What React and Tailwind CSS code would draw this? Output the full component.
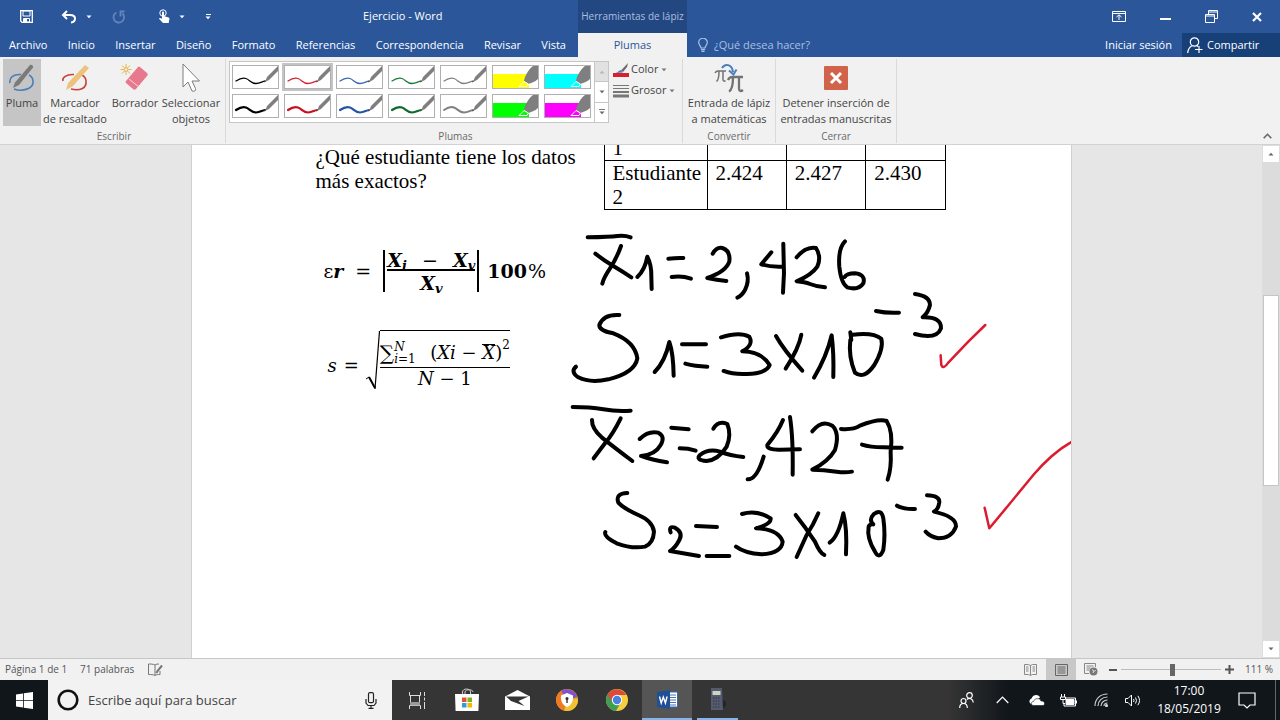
import React, { useState } from "react";

/* ────── static data ────── */
const TABS = [
    "Archivo", "Inicio", "Insertar", "Diseño", "Formato",
    "Referencias", "Correspondencia", "Revisar", "Vista",
];

const PENS = [
    { color: "#000000", w: 1.3 },
    { color: "#d8202f", w: 1.3 },
    { color: "#3a66b0", w: 1.3 },
    { color: "#1b7a3a", w: 1.3 },
    { color: "#808080", w: 1.3 },
    { color: "#ffff00", marker: true },
    { color: "#00ffff", marker: true },
    { color: "#000000", w: 2.2 },
    { color: "#c8101f", w: 2.2 },
    { color: "#2455a4", w: 2.2 },
    { color: "#0c6b2a", w: 2.2 },
    { color: "#808080", w: 2 },
    { color: "#00ff00", marker: true },
    { color: "#ff00ff", marker: true },
];

const INK_X1 = [
    "M83 292Q150 291 172 288T212 292",
    "M106 341Q130 360 160 378T214 412M183 318Q170 355 150 385T127 431",
    "M232 411Q255 390 262 350Q275 375 274 410L275 447",
    "M325 356Q350 353 370 354M335 411Q365 406 393 416",
    "M458 341Q470 320 487 324Q512 332 508 365Q498 395 442 414Q470 420 499 423",
    "M561 400Q568 425 555 450Q545 468 532 473",
    "M634 337L604 373Q630 381 664 380M670 311L672 400L669 458",
    "M710 352Q738 318 768 324Q785 350 772 380Q755 405 710 424Q735 426 750 432Q770 440 795 442",
    "M855 304Q834 325 838 380Q843 430 862 442Q895 452 910 430Q918 404 885 400Q860 400 854 411",
];

const INK_S1 = [
    "M178 75Q130 72 118 105Q117 122 160 130Q225 155 232 205Q225 248 145 268Q90 280 55 262Q30 245 48 230",
    "M284 246Q315 215 328 156Q340 190 341 257",
    "M366 163L438 163M376 221Q405 229 442 230",
    "M483 142Q540 124 568 140Q582 165 547 184Q605 185 629 225Q620 250 560 252Q520 254 491 243",
    "M648 138Q670 178 727 242M724 134Q717 175 677 236",
    "M762 263Q800 200 815 136Q822 190 820 261",
    "M871 127L874 150M878 134Q940 126 964 146Q972 175 943 225Q912 270 885 248Q865 200 871 150",
    "M948 63Q980 70 1017 68",
    "M1065 12Q1110 18 1110 45Q1105 68 1088 82Q1145 80 1143 115Q1130 150 1065 132",
];

const INK_X2_S2 = [
    "M38 36Q90 36 130 43T212 47",
    "M96 75Q95 100 125 127Q160 155 217 198M182 70Q160 115 135 145L101 190",
    "M239 132Q265 106 295 113Q317 125 302 150Q285 180 243 183Q275 195 321 202",
    "M334 98L386 103M359 160Q385 160 407 167",
    "M460 101Q475 75 502 87Q515 120 500 155Q475 195 440 198Q405 195 420 180Q445 160 480 170Q510 182 550 186",
    "M611 185Q590 255 563 253",
    "M669 75Q655 110 622 150Q620 165 660 164L720 163M690 66Q700 130 698 239",
    "M757 109Q785 73 817 92Q840 115 825 165Q805 200 757 224Q790 224 830 230Q855 234 876 230",
    "M843 102Q880 105 900 92Q955 70 980 78Q1000 110 992 170Q995 220 983 254M906 149Q930 157 970 157L1025 158",
    "M202 294Q165 295 175 323Q190 340 235 360Q278 378 282 410Q280 445 255 455Q215 462 170 445Q130 425 136 411",
    "M332 412Q325 392 345 398Q370 412 358 435Q345 460 330 468Q370 475 417 483",
    "M408 393L471 396M440 483L508 483",
    "M546 357Q590 343 632 370Q635 387 588 400Q655 402 668 440Q665 475 605 478Q555 475 528 455",
    "M707 360Q735 395 765 440Q780 475 793 480M775 355Q760 390 740 420L710 486",
    "M809 443Q835 425 850 355Q862 400 858 478",
    "M940 388Q925 375 942 357Q965 340 970 370Q977 420 970 465Q958 495 945 470Q920 430 926 395Q928 388 938 388",
    "M1011 332Q1030 343 1065 342",
    "M1101 301Q1140 302 1138 322Q1135 345 1122 350Q1190 365 1188 395Q1175 430 1135 430Q1110 425 1097 410",
];

/* ────── small helpers ────── */
function Caret({ className = "" }) {
    return (
        <svg width="6" height="4" viewBox="0 0 6 4" className={className} aria-hidden="true">
            <path d="M.5 .5h5L3 3.300z" fill="currentColor" />
        </svg>
    );
}

function PenSwatch({ pen, selected, onClick }) {
    return (
        <button
            type="button"
            onClick={onClick}
            aria-label={`Pluma ${pen.color}`}
            aria-pressed={selected}
            className={
                selected
                    ? "h-6 w-[47px] border border-[#b0b0b0] bg-white outline-2 outline-[#c4c4c4]"
                    : "h-6 w-[47px] border border-[#b0b0b0] bg-white"
            }
        >
            {pen.marker ? (
                <svg width="45" height="22" viewBox="0 0 45 22" className="block">
                    <path d="M0 8h36v14H0z" fill={pen.color} />
                    <path d="M45 0v13c-3 3-7 4-10 5l-4-3c1-6 5-12 9-15z" fill="#7f7f7f" />
                    <path d="M31 15.500l-5 5h8l1.500-2.500z" fill={pen.color} stroke="#fff" />
                </svg>
            ) : (
                <svg width="45" height="22" viewBox="0 0 45 22" className="block">
                    <path
                        d="M3 15c3-2 6-4 10-2.500s5 5 10 5c4 0 6-2 9-2.500"
                        fill="none" stroke={pen.color} strokeWidth={pen.w} strokeLinecap="round"
                    />
                    <path d="M45 0v5L36 14l-4 2 2-5L44 1z" fill="#7f7f7f" />
                    <path d="M31 16l2-1" stroke="#555" />
                </svg>
            )}
        </button>
    );
}

function RibbonButton({ icon, lines, className }) {
    return (
        <button type="button" className={`flex h-[67px] shrink-0 flex-col items-center pt-[3px] ${className}`}>
            <span className="flex h-8 items-center">{icon}</span>
            {lines.map((l) => (
                <span key={l} className="block h-4 leading-[18px] whitespace-nowrap">{l}</span>
            ))}
        </button>
    );
}

function Group({ label, className = "", children }) {
    return (
        <section aria-label={label} className={`flex shrink-0 flex-col border-r border-[#dadada] ${className}`}>
            <div className="flex flex-1">{children}</div>
            <div className="h-4 text-center text-[10px] leading-[18px] text-[#6a6a6a]">{label}</div>
        </section>
    );
}

/* ────── title bar + tabs ────── */
function Header() {
    return (
        <header className="flex h-[57px] shrink-0 bg-[#2b579a] text-[11px] text-white">
            <div className="flex w-[578px] shrink-0 flex-col">
                <div className="flex h-[33px] items-center">
                    <button type="button" aria-label="Guardar" className="ml-5">
                        <svg width="13" height="13" viewBox="0 0 13 13">
                            <path d="M.7.7h11.600v11.600H2L.7 11z" fill="none" stroke="#fff" strokeWidth="1.300" />
                            <path d="M3 1h7v5H3zM3.500 8.500h6V12h-6z" fill="none" stroke="#fff" />
                            <path d="M4 9h3v3H4z" fill="#fff" />
                        </svg>
                    </button>
                    <button type="button" aria-label="Deshacer" className="ml-7 flex items-center gap-[9px]">
                        <svg width="16" height="14" viewBox="0 0 16 14" fill="none" stroke="#fff" strokeWidth="2">
                            <path d="M6 1L2 5l4 4M2 5h7c7 0 6 7 1 7.500" />
                        </svg>
                        <Caret />
                    </button>
                    <button type="button" aria-label="Rehacer" className="ml-5">
                        <svg width="14" height="14" viewBox="0 0 14 14" fill="none" stroke="#6285bb" strokeWidth="1.800">
                            <path d="M4.500 2.500a5.300 5.300 0 1 0 6 1M12.500 1.500H8.500v5" />
                        </svg>
                    </button>
                    <button type="button" aria-label="Modo táctil" className="ml-8 flex items-center gap-[9px]">
                        <svg width="12" height="15" viewBox="0 0 12 15">
                            <circle cx="5" cy="4" r="3.200" fill="none" stroke="#fff" />
                            <path d="M4 3.500c0-1.500 2-1.500 2 0V7l4.500 1.500c.8.300 1 .8.900 1.500l-.7 4H5L1 9.800c0-1 1.200-1.200 3 0z" fill="#fff" />
                        </svg>
                        <Caret />
                    </button>
                    <button type="button" aria-label="Personalizar" className="ml-5 flex flex-col items-center gap-px">
                        <span className="h-px w-[5px] bg-white" />
                        <Caret />
                    </button>
                    <h1 className="ml-[152px] whitespace-nowrap">Ejercicio - Word</h1>
                </div>
                <nav className="flex h-6 items-center justify-between pr-3 pl-[9px]">
                    {TABS.map((tab) => (
                        <button key={tab} type="button">{tab}</button>
                    ))}
                </nav>
            </div>

            <div className="flex w-[109px] shrink-0 flex-col text-center">
                <div className="h-[33px] bg-[#234780] text-[10px] leading-[33px] whitespace-nowrap text-[#a9bfe0]">
                    Herramientas de lápiz
                </div>
                <button type="button" className="h-6 bg-[#f1f1f1] text-[#2b579a]">Plumas</button>
            </div>

            <div className="flex flex-1 flex-col">
                <div className="flex h-[33px] items-center justify-end pr-[18px]">
                    <button type="button" aria-label="Opciones de la cinta" className="mr-[34px]">
                        <svg width="14" height="11" viewBox="0 0 14 11" fill="none" stroke="#fff">
                            <path d="M.5.5h13v10H.5zM.5 2.500h13M7 9V4M4.500 6L7 3.800 9.500 6" />
                        </svg>
                    </button>
                    <button type="button" aria-label="Minimizar" className="mr-[34px]">
                        <span className="mt-1 block h-0.5 w-[11px] bg-white" />
                    </button>
                    <button type="button" aria-label="Restaurar" className="mr-[34px]">
                        <svg width="13" height="13" viewBox="0 0 13 13" fill="none" stroke="#fff">
                            <path d="M.5 4.500h9v8h-9zM.5 6h9M3.500 4V.5h9v8H10M3.500 2h9" />
                        </svg>
                    </button>
                    <button type="button" aria-label="Cerrar">
                        <svg width="10" height="10" viewBox="0 0 10 10" stroke="#fff" strokeWidth="2.200">
                            <path d="M1 1l8 8M9 1L1 9" />
                        </svg>
                    </button>
                </div>
                <div className="flex h-6 items-center">
                    <label className="ml-[11px] flex flex-1 items-center gap-1.5">
                        <svg width="10" height="14" viewBox="0 0 10 14" fill="none" stroke="#a9c3e8" strokeWidth="1.200">
                            <path d="M3 10c0-2-2.300-3-2.300-5.500a4.300 4.300 0 0 1 8.600 0C9.300 7 7 8 7 10zM3 11.700h4M3.500 13.400h3" />
                        </svg>
                        <input
                            type="text"
                            aria-label="¿Qué desea hacer?"
                            placeholder="¿Qué desea hacer?"
                            className="w-40 bg-transparent outline-none placeholder:text-[#a9bfe0]"
                        />
                    </label>
                    <button type="button" className="mr-[10px] whitespace-nowrap">Iniciar sesión</button>
                    <button type="button" className="flex h-6 w-[98px] items-center gap-1 bg-[#173f78] pl-[5px]">
                        <svg width="16" height="16" viewBox="0 0 16 16" fill="none" stroke="#fff" strokeWidth="1.200">
                            <circle cx="7.500" cy="5" r="4.200" />
                            <path d="M.7 16c.3-4 2-6 4-7.300M10 8.500l1 1M8 12.500h7.500M12 9v7" />
                        </svg>
                        Compartir
                    </button>
                </div>
            </div>
        </header>
    );
}

/* ────── ribbon ────── */
function Ribbon() {
    const [pen, setPen] = useState(1);

    return (
        <div className="flex h-[88px] shrink-0 items-stretch border-b border-[#d2d2d2] bg-[#f1f1f1] pt-0.5 pb-px text-[11px] text-[#444]">
            <Group label="Escribir" className="w-[226px] pl-[3px]">
                <RibbonButton
                    className="w-[38px] bg-[#c5c5c5]"
                    lines={["Pluma"]}
                    icon={
                        <svg width="28" height="28" viewBox="0 0 28 28" fill="none">
                            <path d="M13 10.500C5 10 1 14 2 19M6 25c8 3 20 0 19-8-.2-3-2-5-4-6" stroke="#4a7ebb" strokeWidth="1.600" />
                            <path d="M22 1c1.500-.7 3.500.8 3 2.500L11 21l-6 3 2-5.500z" fill="#7a7a7a" />
                        </svg>
                    }
                />
                <RibbonButton
                    className="w-[68px]"
                    lines={["Marcador", "de resaltado"]}
                    icon={
                        <svg width="28" height="28" viewBox="0 0 28 28" fill="none">
                            <path d="M13 10.500C5 10 1 14 2 17M10 25c8 2 16 0 15-8-.2-3-2-5-4-6" stroke="#c8413a" strokeWidth="1.600" />
                            <path d="M24 1l4 3-16 18-7 4 2-7z" fill="#ecc27c" />
                        </svg>
                    }
                />
                <RibbonButton
                    className="w-[52px]"
                    lines={["Borrador"]}
                    icon={
                        <svg width="30" height="28" viewBox="0 0 30 28" fill="none">
                            <path d="M6 0v11M.5 5.500h11M2 1.500l8 8M10 1.500l-8 8" stroke="#e8b450" />
                            <circle cx="6" cy="5.500" r="1.800" fill="#f1f1f1" stroke="#e8b450" />
                            <path d="M20 3l7 6c1 1 1 2 0 3L16 25c-1 1-2 1-3 0l-7-6c-.6-.7-.6-1.300 0-2L18 3c.6-.8 1.300-.6 2 0z" fill="#e8788c" />
                            <path d="M9 15l10 8" stroke="#f6dfe3" />
                        </svg>
                    }
                />
                <RibbonButton
                    className="w-[60px]"
                    lines={["Seleccionar", "objetos"]}
                    icon={
                        <svg width="20" height="30" viewBox="0 0 20 30">
                            <path d="M2 1v23l5-5 4 9c2.500 1 4-.5 3.500-2.500L11 18h7.500z" fill="#fff" stroke="#7c7c7c" />
                        </svg>
                    }
                />
            </Group>

            <Group label="Plumas" className="w-[457px] pl-[3px]">
                <div className="mt-[2px] flex h-[62px] border border-[#c6c6c6] bg-white">
                    <div className="grid grid-cols-7 content-start gap-x-[5px] gap-y-[5px] pt-[3px] pr-[3px] pl-[2px]">
                        {PENS.map((p, i) => (
                            <PenSwatch key={i} pen={p} selected={i === pen} onClick={() => setPen(i)} />
                        ))}
                    </div>
                    <div className="flex w-[14px] flex-col border-l border-[#c6c6c6] text-[#666]">
                        <button type="button" aria-label="Arriba" className="flex flex-1 items-center justify-center bg-[#e1e1e1] text-[#b5b5b5]">
                            <Caret className="rotate-180" />
                        </button>
                        <button type="button" aria-label="Abajo" className="flex flex-1 items-center justify-center border-y border-[#c6c6c6]">
                            <Caret />
                        </button>
                        <button type="button" aria-label="Más plumas" className="flex flex-1 flex-col items-center justify-center gap-px">
                            <span className="h-px w-1.5 bg-[#777]" />
                            <Caret />
                        </button>
                    </div>
                </div>
                <div className="ml-1 flex flex-col">
                    <button type="button" className="flex h-[21px] items-center gap-0.5">
                        <svg width="16" height="16" viewBox="0 0 16 16">
                            <path d="M15 1l-1 4-4 5-2-1.500z" fill="#6a6a6a" />
                            <path d="M7.500 8L10 10.500 3 11z" fill="#4a7ebb" />
                            <path d="M0 11h16v4H0z" fill="#d9202e" />
                        </svg>
                        Color <Caret className="ml-px text-[#777]" />
                    </button>
                    <button type="button" className="flex h-[21px] items-center gap-0.5">
                        <svg width="16" height="14" viewBox="0 0 16 14" stroke="#777">
                            <path d="M0 1.500h16M0 4.500h16" />
                            <path d="M0 8h16" strokeWidth="2" />
                            <path d="M0 12h16" strokeWidth="3" />
                        </svg>
                        Grosor <Caret className="ml-px text-[#777]" />
                    </button>
                </div>
            </Group>

            <Group label="Convertir" className="w-[93px]">
                <RibbonButton
                    className="w-full"
                    lines={["Entrada de lápiz", "a matemáticas"]}
                    icon={
                        <svg width="30" height="30" viewBox="0 0 30 30" fill="none" stroke="#737373">
                            <path d="M1 10q1-2 3-2h8M5 8.500c0 4 0 8-2.500 10M9 8.500v8c0 2 1.500 2 2.500 1" strokeWidth="1.500" />
                            <path d="M14 17q1.500-3 4-3h11M19 14.500c0 7-.5 12-4 14M25 14.500v11c0 3 2 3 4 1.500" strokeWidth="2.300" />
                            <path d="M8 5c3-5 10-4 11 4" stroke="#4a7ebb" strokeWidth="2" />
                            <path d="M15 7.500l4.500 4 3-5" stroke="#4a7ebb" strokeWidth="2" />
                        </svg>
                    }
                />
            </Group>

            <Group label="Cerrar" className="w-[121px]">
                <RibbonButton
                    className="w-full"
                    lines={["Detener inserción de", "entradas manuscritas"]}
                    icon={
                        <svg width="24" height="24" viewBox="0 0 24 24">
                            <rect width="24" height="24" rx="1" fill="#d0634a" />
                            <path d="M7 7l10 10M17 7L7 17" stroke="#fff" strokeWidth="3" />
                        </svg>
                    }
                />
            </Group>

            <button type="button" aria-label="Contraer la cinta" className="mr-2 mb-1 ml-auto self-end">
                <svg width="9" height="6" viewBox="0 0 9 6" fill="none" stroke="#666" strokeWidth="1.600">
                    <path d="M.7 5.300l3.800-4 3.800 4" />
                </svg>
            </button>
        </div>
    );
}

/* ────── formulas in the document ────── */
function MathVar({ sub }) {
    return (
        <i className="flex h-5 items-start">
            X<span className="mt-1.5 text-[13px]">{sub}</span>
        </i>
    );
}

function RelativeError() {
    return (
        <div className="flex h-[42px] items-center font-['DejaVu_Serif',serif] text-[19px] leading-5 font-bold">
            <span className="font-normal">ε</span>
            <i>r</i>
            <span className="mx-3 font-normal">=</span>
            <span className="flex h-[42px] items-center border-x-2 border-black px-0.5">
                <span className="flex w-[88px] flex-col items-center">
                    <span className="flex h-[21px] w-full justify-between border-b-2 border-black">
                        <MathVar sub="i" />
                        <span className="font-normal">−</span>
                        <MathVar sub="v" />
                    </span>
                    <span className="h-[22px] pt-0.5"><MathVar sub="v" /></span>
                </span>
            </span>
            <span className="ml-2">100</span>
            <span className="ml-px font-normal">%</span>
        </div>
    );
}

function StandardDeviation() {
    return (
        <div className="flex h-[60px] font-['DejaVu_Serif',serif] text-[18px] leading-5">
            <span className="self-center pt-3"><i>s</i></span>
            <span className="mx-[7px] self-center pt-3">=</span>
            <svg width="14" height="60" viewBox="0 0 14 60" fill="none" stroke="#000" className="shrink-0">
                <path d="M0 49l3-2" />
                <path d="M3 47l6 11" strokeWidth="2" />
                <path d="M9 59L13.500 1" strokeWidth="1.200" />
            </svg>
            <span className="flex h-[60px] w-[130px] flex-col items-center border-t border-black">
                <span className="flex h-[37px] w-full items-center border-b border-black pt-2">
                    <span className="text-[20px]">∑</span>
                    <span className="flex flex-col text-[12px] leading-3">
                        <i>N</i>
                        <span><i>i</i>=1</span>
                    </span>
                    <span className="ml-auto whitespace-nowrap">
                        (<i>Xi</i> − <i className="inline-block border-t border-black leading-4">X</i>)
                    </span>
                    <span className="-mt-4 text-[12px]">2</span>
                </span>
                <span className="pt-px"><i>N</i> − 1</span>
            </span>
        </div>
    );
}

/* ────── pen strokes laid over the page ────── */
function Ink() {
    return (
        <svg
            width="880" height="513" viewBox="192 145 880 513"
            fill="none" strokeLinecap="round" strokeLinejoin="round"
            className="pointer-events-none absolute top-0 left-0"
            aria-hidden="true"
        >
            <g stroke="#000" strokeWidth="12">
                <g transform="translate(560 140) scale(.3333)">
                    {INK_X1.map((d) => <path key={d} d={d} />)}
                </g>
                <g transform="translate(560 290) scale(.3333)">
                    {INK_S1.map((d) => <path key={d} d={d} />)}
                </g>
                <g transform="translate(560 395) scale(.3333)">
                    {INK_X2_S2.map((d) => <path key={d} d={d} />)}
                </g>
            </g>
            <g stroke="#dc1c2e" strokeWidth="7.500">
                <path transform="translate(560 290) scale(.3333)" d="M1142 196L1144 225Q1150 240 1165 218L1225 155L1276 105" />
                <path transform="translate(560 395) scale(.3333)" d="M1274 338L1288 400Q1330 350 1420 240Q1480 170 1540 138" />
            </g>
        </svg>
    );
}

function Document() {
    const cell = "border border-black px-2 align-top";

    return (
        <main className="flex min-h-0 flex-1 bg-[#e6e6e6]">
            <div className="min-w-0 flex-1 overflow-hidden">
                <article className="relative mx-auto h-full w-[881px] overflow-hidden border-x border-[#d0d0d0] bg-white text-black">
                    <div className="flex items-start font-['Liberation_Serif',serif] text-[21px] leading-6">
                        <div className="ml-[124px] w-[288px]">
                            <p className="w-[280px]">¿Qué estudiante tiene los datos más exactos?</p>
                            <div className="mt-[57px] ml-2"><RelativeError /></div>
                            <div className="mt-[38px] ml-3"><StandardDeviation /></div>
                        </div>
                        <table className="-mt-[10px] w-[342px] table-fixed border-collapse">
                            <colgroup>
                                <col className="w-[103px]" />
                                <col /><col /><col />
                            </colgroup>
                            <tbody>
                                <tr>
                                    <td className={cell}>1</td>
                                    <td className={cell} />
                                    <td className={cell} />
                                    <td className={cell} />
                                </tr>
                                <tr>
                                    <td className={cell}>Estudiante 2</td>
                                    <td className={cell}>2.424</td>
                                    <td className={cell}>2.427</td>
                                    <td className={cell}>2.430</td>
                                </tr>
                            </tbody>
                        </table>
                    </div>
                    <Ink />
                </article>
            </div>

            {/* scroll bar */}
            <div className="flex w-[18px] flex-col items-center bg-[#dcdcdc] py-px text-[#666]">
                <button type="button" aria-label="Subir" className="flex h-4 w-4 items-center justify-center bg-white">
                    <Caret className="rotate-180" />
                </button>
                <div className="flex-[134]" />
                <div className="w-4 flex-[191] border border-[#c6c6c6] bg-white" />
                <div className="flex-[156]" />
                <button type="button" aria-label="Bajar" className="flex h-4 w-4 items-center justify-center bg-white">
                    <Caret />
                </button>
            </div>
        </main>
    );
}

/* ────── status bar ────── */
function StatusBar() {
    const [zoom, setZoom] = useState(52);

    return (
        <footer className="flex h-[22px] shrink-0 items-center border-t border-[#c6c6c6] bg-[#f1f1f1] text-[10px] text-[#555]">
            <span className="ml-[5px] w-[75px]">Página 1 de 1</span>
            <span className="w-[68px]">71 palabras</span>
            <button type="button" aria-label="Revisión">
                <svg width="15" height="13" viewBox="0 0 15 13" fill="none" stroke="#777">
                    <path d="M7 2v10.500M7 2C5 1 3 1 .5 1v10.500c2.500 0 4.500 0 6.500 1 1-1 3-1 5-1V8M7 2c1-1 3-1 4-1" />
                    <path d="M14 2.500L9.500 8l-1 2" strokeWidth="2" />
                </svg>
            </button>

            <div className="ml-auto flex h-full items-center">
                <button type="button" aria-label="Modo de lectura" className="mr-[9px]">
                    <svg width="13" height="12" viewBox="0 0 13 12" fill="none" stroke="#888">
                        <path d="M.5.5h4l2 1 2-1h4v10h-4l-2 1-2-1h-4zM6.500 1v10M2 3h2.500M2 5h2.500M2 7h2.500M8.500 3H11M8.500 5H11M8.500 7H11" />
                    </svg>
                </button>
                <button type="button" aria-label="Diseño de impresión" className="flex h-full w-[30px] items-center justify-center bg-[#c8c8c8]">
                    <svg width="13" height="12" viewBox="0 0 13 12" fill="none" stroke="#666">
                        <path d="M.5.5h12v11H.5zM2.500 3h8M2.500 5h8M2.500 7h8M2.500 9h8" />
                    </svg>
                </button>
                <button type="button" aria-label="Diseño web" className="ml-2">
                    <svg width="14" height="13" viewBox="0 0 14 13" fill="none" stroke="#888">
                        <path d="M5 10.500H.5V.5h11V4M2.500 3h7M2.500 5h4M2.500 7h3" />
                        <circle cx="9.500" cy="8.500" r="4" fill="#777" stroke="none" />
                        <path d="M8 6.500l2 1.500-1 2M11.500 7l-1 1.500" stroke="#ddd" />
                    </svg>
                </button>
                <button type="button" aria-label="Alejar" className="ml-[11px] h-0.5 w-2 bg-[#555]" />
                <input
                    type="range"
                    min="0"
                    max="100"
                    value={zoom}
                    onChange={(e) => setZoom(Number(e.target.value))}
                    aria-label="Zoom"
                    className="mx-1 h-3 w-[100px] appearance-none bg-[linear-gradient(#bdbdbd,#bdbdbd)] bg-[length:100%_1px] bg-center bg-no-repeat [&::-webkit-slider-thumb]:h-3 [&::-webkit-slider-thumb]:w-[5px] [&::-webkit-slider-thumb]:appearance-none [&::-webkit-slider-thumb]:bg-[#666]"
                />
                <button type="button" aria-label="Acercar" className="mr-[11px]">
                    <svg width="9" height="9" viewBox="0 0 9 9" stroke="#555" strokeWidth="2">
                        <path d="M0 4.500h9M4.500 0v9" />
                    </svg>
                </button>
                <span className="w-[35px]">111 %</span>
            </div>
        </footer>
    );
}

/* ────── windows task bar ────── */
function TaskBar() {
    const slot = "flex h-10 w-[50px] items-center justify-center";

    return (
        <div className="flex h-10 shrink-0 bg-[#353535] text-white">
            <button type="button" aria-label="Inicio de Windows" className="flex w-12 shrink-0 items-center justify-center bg-[#11161b]">
                <svg width="17" height="17" viewBox="0 0 17 17" fill="#fff">
                    <path d="M0 2.500L7 1.400V8H0zM7.800 1.300L17 0v8H7.800zM0 8.800h7v6.700l-7-1zM7.800 8.800H17V17l-9.200-1.300z" />
                </svg>
            </button>
            <label className="flex w-[344px] shrink-0 items-center bg-[#f2f2f2] pl-2">
                <svg width="24" height="24" viewBox="0 0 24 24" fill="none">
                    <circle cx="12" cy="12" r="9.300" stroke="#111" strokeWidth="2.600" />
                </svg>
                <input
                    type="text"
                    aria-label="Escribe aquí para buscar"
                    placeholder="Escribe aquí para buscar"
                    className="ml-2 w-0 flex-1 bg-transparent pt-0.5 text-[13px] outline-none placeholder:text-[#444]"
                />
                <svg width="12" height="17" viewBox="0 0 12 17" fill="none" stroke="#222" strokeWidth="1.200" className="mr-[15px]">
                    <rect x="3.500" y=".7" width="5" height="10" rx="1.500" />
                    <path d="M1 7v4l2 2.500h6l2-2.500V7M6 13.500V16M3.500 16.300h5" />
                </svg>
            </label>

            <div className="flex shrink-0">
                <button type="button" aria-label="Vista de tareas" className={slot}>
                    <svg width="17" height="17" viewBox="0 0 17 17" fill="none" stroke="#ddd">
                        <path d="M.5 0v3.500h11V0M.5 17v-3.500h11V17M1.500 3.500v10M10.500 3.500v10" />
                        <path d="M1 10h10v3.500H1z" fill="#999" stroke="none" />
                        <path d="M15.500 0v17" strokeDasharray="4 1.500 3 1.500 7" />
                    </svg>
                </button>
                <button type="button" aria-label="Microsoft Store" className={slot}>
                    <svg width="24" height="24" viewBox="0 0 24 24">
                        <path d="M7.500 7V4c0-4 8-4 8 0v3M10 7V4c0-3 8-3 8 0" fill="none" stroke="#ccc" />
                        <path d="M0 6h24l-.6 17H.6z" fill="#fff" />
                        <path d="M7 9.500h4.500V14H7z" fill="#e8502b" />
                        <path d="M12.500 9.500H17V14h-4.500z" fill="#7ab51d" />
                        <path d="M7 15h4.500v4.500H7z" fill="#2aa0da" />
                        <path d="M12.500 15H17v4.500h-4.500z" fill="#f5b800" />
                    </svg>
                </button>
                <button type="button" aria-label="Correo" className={slot}>
                    <svg width="25" height="20" viewBox="0 0 25 20">
                        <path d="M0 6.500L12.500 0 25 6.500V20H0z" fill="#fff" />
                        <path d="M1 6.500h22.500l-10 4.500 6 5-13.500-5z" fill="#353535" />
                    </svg>
                </button>
                <button type="button" aria-label="Navegador seguro" className={slot}>
                    <svg width="22" height="22" viewBox="0 0 22 22">
                        <circle cx="11" cy="11" r="11" fill="#f0a030" />
                        <path d="M5 2a11 11 0 0 1 16.500 6L11 11z" fill="#8152cc" />
                        <path d="M22 10a11 11 0 0 1-14 11.500L11 11z" fill="#f1c232" />
                        <path d="M5 2a11 11 0 0 0 3 19.500L11 12z" fill="#ef7a26" />
                        <path d="M11 4l6 2.500c.5 6-2 10-6 11.500-4-1.500-6.500-5.500-6-11.500z" fill="#fff" />
                        <circle cx="11" cy="9.500" r="1.500" fill="#333" />
                        <path d="M10.300 10h1.400v4h-1.400z" fill="#333" />
                    </svg>
                </button>
                <button type="button" aria-label="Chrome" className={slot}>
                    <svg width="22" height="22" viewBox="0 0 22 22">
                        <circle cx="11" cy="11" r="11" fill="#f7ce3e" />
                        <path d="M11 11L1.500 5.500A11 11 0 0 0 10 22l5-9z" fill="#3f9e52" />
                        <path d="M1.500 5.500A11 11 0 0 1 20.500 6H11l-4.500 7.500z" fill="#dc4a3d" />
                        <circle cx="11" cy="11" r="5.200" fill="#fff" />
                        <circle cx="11" cy="11" r="4.200" fill="#4a80e0" />
                    </svg>
                </button>
                <button type="button" aria-label="Word" className={`${slot} border-b-2 border-[#85b5ea] bg-[#555]`}>
                    <svg width="21" height="19" viewBox="0 0 21 19">
                        <path d="M11 2h9.500v15H11z" fill="#fff" stroke="#3a66b0" />
                        <path d="M13 5h6M13 7.500h6M13 10h6M13 12.500h6M13 15h6" stroke="#4a70b5" />
                        <path d="M0 2l13-2v19L0 17z" fill="#1f5096" />
                        <path d="M2.500 6.500l1.700 6.500 2.100-6 2.100 6 1.700-6.500" fill="none" stroke="#fff" strokeWidth="1.400" />
                    </svg>
                </button>
                <button type="button" aria-label="Calculadora" className="ml-[5px] flex h-10 w-[41px] items-center justify-center border-b-2 border-[#85b5ea]">
                    <svg width="16" height="24" viewBox="0 0 16 24">
                        <circle cx="12" cy="17" r="4" fill="#22242a" />
                        <path d="M1 1h11l1 22H1z" fill="#555b6c" />
                        <path d="M2.500 4h8v4h-8z" fill="#cdd4c0" />
                        <path d="M3 11h7M3 14h7M3 17h7M3 20h7" stroke="#33384a" strokeDasharray="1.500 1" />
                    </svg>
                </button>
            </div>

            <div className="ml-auto flex w-[332px] shrink-0 items-center bg-[linear-gradient(90deg,#353535,#11161b_60px)] pl-[11px]">
                <button type="button" aria-label="Contactos" className="mr-[22px]">
                    <svg width="15" height="17" viewBox="0 0 15 17" fill="none" stroke="#fff" strokeWidth="1.200">
                        <circle cx="10.500" cy="3.500" r="2.800" />
                        <circle cx="4.500" cy="9" r="2.500" />
                        <path d="M.7 16c0-3 1.500-4.500 3.800-4.500S8.300 13 8.300 16M8 7.500c2-2 6-1 6.300 3" />
                    </svg>
                </button>
                <button type="button" aria-label="Iconos ocultos" className="mr-[19px]">
                    <svg width="13" height="8" viewBox="0 0 13 8" fill="none" stroke="#fff" strokeWidth="1.200">
                        <path d="M.7 7l5.800-6 5.800 6" />
                    </svg>
                </button>
                <button type="button" aria-label="OneDrive" className="mr-[15px]">
                    <svg width="17" height="12" viewBox="0 0 17 12" fill="#fff">
                        <path d="M3 10a3 3 0 0 1 .5-5.500C5 0 11 0 12 3.500" />
                        <path d="M5 11.500c-2.500-1-2-4 .5-4C6.500 4 12 3.500 13 7c4-.5 4.500 4 2 4.500z" stroke="#11161b" strokeWidth=".6" />
                    </svg>
                </button>
                <button type="button" aria-label="Batería" className="mr-[17px]">
                    <svg width="17" height="13" viewBox="0 0 17 13" fill="none" stroke="#fff">
                        <path d="M5 4h10.500v8H4V9" />
                        <path d="M6 5.500h8v5H6z" fill="#fff" />
                        <path d="M16.500 6.500v3M1.500 0v3M4.500 0v3M.5 3h5v2.500h-5zM3 6v3.500h2" />
                    </svg>
                </button>
                <button type="button" aria-label="Wi-Fi" className="mr-4">
                    <svg width="15" height="14" viewBox="0 0 15 14" fill="none" stroke="#ccc" strokeWidth="1.200">
                        <path d="M1 13C1 6 6 1 13.500 1M4 13c0-5 4-9 9.500-9M7 13c0-3.500 3-6 6.500-6M10 13c0-2 1.500-3 3.500-3" />
                        <circle cx="12.500" cy="12.500" r="1" fill="#fff" />
                    </svg>
                </button>
                <button type="button" aria-label="Volumen" className="mr-3.5">
                    <svg width="16" height="13" viewBox="0 0 16 13" fill="none" stroke="#fff">
                        <path d="M.5 4.500H3L6.500 1v11L3 8.500H.5zM8.500 5q1 1.500 0 3M10.500 3.500q2 3 0 6M12.800 1.800q3.500 4.700 0 9.400" />
                    </svg>
                </button>
                <time className="w-[68px] text-center text-[12px] leading-[18px]">
                    <span className="block">17:00</span>
                    <span className="block">18/05/2019</span>
                </time>
                <button type="button" aria-label="Notificaciones" className="ml-[15px]">
                    <svg width="18" height="17" viewBox="0 0 18 17" fill="none" stroke="#fff" strokeWidth="1.200">
                        <path d="M1 1h16v12h-5l-3 3-3-3H1z" />
                    </svg>
                </button>
                <span className="mr-1 ml-auto h-full w-px bg-[#666]" />
            </div>
        </div>
    );
}

export default function App() {
    return (
        <div className="flex h-screen flex-col overflow-hidden font-['Open_Sans',sans-serif]">
            <Header />
            <Ribbon />
            <Document />
            <StatusBar />
            <TaskBar />
        </div>
    );
}
